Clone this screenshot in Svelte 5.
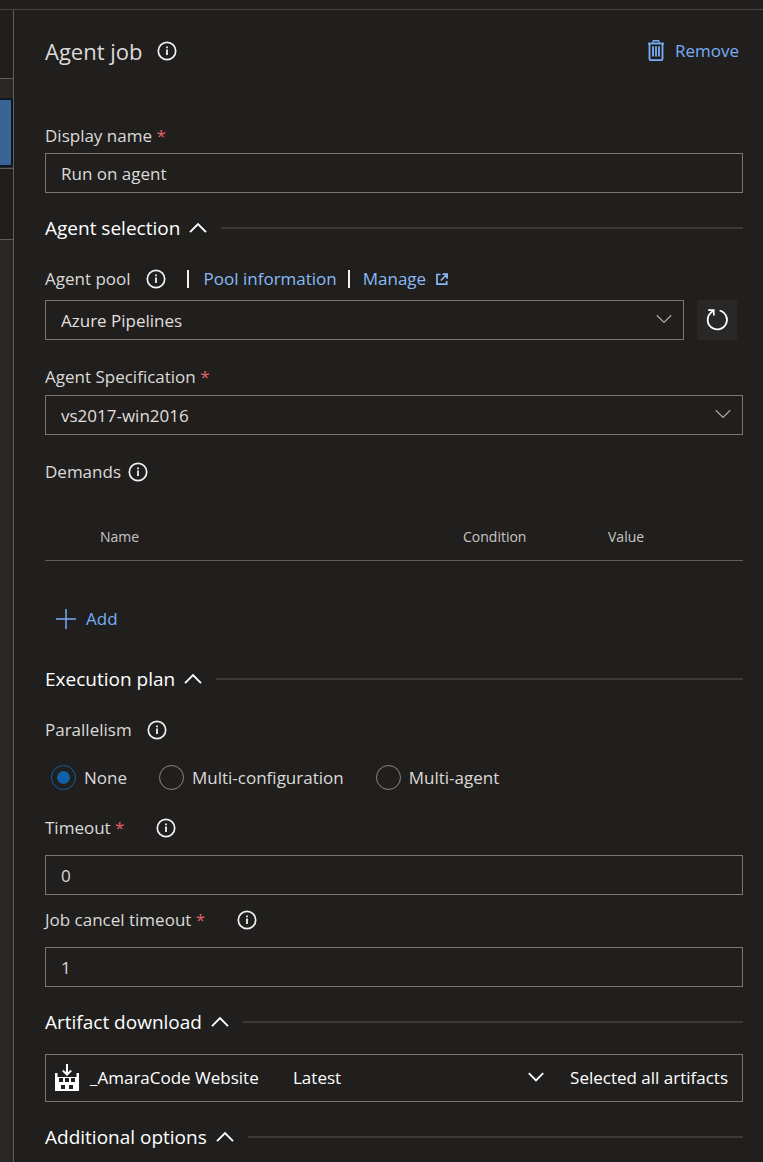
<script>
  let displayName = $state("Run on agent");
  let pool = $state("Azure Pipelines");
  let spec = $state("vs2017-win2016");
  let parallelism = $state("None");
  let timeout = $state("0");
  let cancelTimeout = $state("1");
  let version = $state("Latest");

  const modes = ["None", "Multi-configuration", "Multi-agent"];
  let open = $state({ agent: true, plan: true, artifacts: true, options: true });
</script>

{#snippet info(label)}
  <button class="info" type="button" aria-label="About {label}">
    <svg viewBox="0 0 20 20" width="20" height="20">
      <circle cx="10" cy="10" r="8.7" fill="none" stroke="currentColor" stroke-width="1.7" />
      <path d="M9.1 8.4h1.8v5.6H9.1zM9.1 5.6h1.8v1.7H9.1z" fill="currentColor" />
    </svg>
  </button>
{/snippet}

{#snippet chevron()}
  <svg class="chevron" viewBox="0 0 16 10" width="16" height="10">
    <path d="M.8 1.2 8 8.4l7.2-7.2" fill="none" stroke="currentColor" />
  </svg>
{/snippet}

{#snippet heading(key, text)}
  <div class="section">
    <h2>
      <button type="button" aria-expanded={open[key]} onclick={() => (open[key] = !open[key])}>
        {text}
        <svg class:closed={!open[key]} viewBox="0 0 18 12" width="18" height="12">
          <path d="M1 10.2 9 2.2l8 8" fill="none" stroke="currentColor" stroke-width="1.9" />
        </svg>
      </button>
    </h2>
    <span class="rule"></span>
  </div>
{/snippet}

<div class="page">
  <div class="topbar"></div>
  <div class="stages">
    <div class="stage first"></div>
    <div class="gap"><div class="selected"></div></div>
    <div class="stage second"></div>
  </div>

  <main>
    <header>
      <h1>Agent job</h1>
      {@render info("agent job")}
      <button class="command remove" type="button">
        <svg viewBox="0 0 18 22" width="18" height="22">
          <g fill="none" stroke="currentColor">
            <path d="M1 3.5h16" stroke-width="1.8" />
            <path d="M6 3.2V1.6q0-.8.8-.8h4.4q.8 0 .8.8v1.6" stroke-width="1.4" />
            <path d="M2.5 3.5V19q0 1.2 1.2 1.2h10.6q1.2 0 1.2-1.2V3.5" stroke-width="1.8" />
            <path d="M6 6.2v10.3M9 6.2v10.3M12 6.2v10.3" stroke-width="1.8" />
          </g>
        </svg>
        Remove
      </button>
    </header>

    <div class="label">
      <label for="display-name">Display name <span class="req">*</span></label>
    </div>
    <input class="box" id="display-name" type="text" bind:value={displayName} />

    {@render heading("agent", "Agent selection")}
    {#if open.agent}
      <div class="label pool">
        <label for="pool">Agent pool</label>
        {@render info("agent pool")}
        <span class="bar wide"></span>
        <a href="#pool-information">Pool information</a>
        <span class="bar"></span>
        <a class="manage" href="#manage">
          Manage
          <svg viewBox="0 0 12 12" width="12" height="12">
            <path d="M4.5 1.5H1v9.7h9.7V8M6.5 1.2h4.6v4.6M11 1.3 4.8 7.5" fill="none" stroke="currentColor" stroke-width="1.7" />
          </svg>
        </a>
      </div>
      <div class="pool-row">
        <div class="dropdown">
          <select class="box" id="pool" bind:value={pool}>
            <option>Azure Pipelines</option>
            <option>Default</option>
          </select>
          {@render chevron()}
        </div>
        <button class="refresh" type="button" aria-label="Refresh">
          <svg viewBox="0 0 24 24" width="24" height="24">
            <path d="M14.6 2.5A9.6 9.6 0 1 1 6 4.600L8.300 2.500" fill="none" stroke="currentColor" stroke-width="1.8" />
            <path d="M3.200 2.200h5.600v5.300" fill="none" stroke="currentColor" stroke-width="1.7" />
          </svg>
        </button>
      </div>

      <div class="label after-box">
        <label for="spec">Agent Specification <span class="req">*</span></label>
      </div>
      <div class="dropdown">
        <select class="box" id="spec" bind:value={spec}>
          <option>vs2017-win2016</option>
          <option>ubuntu-latest</option>
        </select>
        {@render chevron()}
      </div>

      <div class="label after-box near">
        <span>Demands</span>
        {@render info("demands")}
      </div>
      <table>
        <colgroup><col /><col class="condition" /><col class="value" /></colgroup>
        <thead>
          <tr><th scope="col">Name</th><th scope="col">Condition</th><th scope="col">Value</th></tr>
        </thead>
      </table>
      <button class="command add" type="button">
        <svg viewBox="0 0 22 22" width="22" height="22">
          <path d="M11 1v20M1 11h20" stroke="currentColor" stroke-width="1.5" />
        </svg>
        Add
      </button>
    {/if}

    {@render heading("plan", "Execution plan")}
    {#if open.plan}
      <div class="label plan">
        <span id="parallelism">Parallelism</span>
        {@render info("parallelism")}
      </div>
      <div class="radios" role="radiogroup" aria-labelledby="parallelism">
        {#each modes as mode}
          <label>
            <input type="radio" name="parallelism" value={mode} bind:group={parallelism} />
            {mode}
          </label>
        {/each}
      </div>

      <div class="label time first-time">
        <label for="timeout">Timeout <span class="req">*</span></label>
        {@render info("timeout")}
      </div>
      <input class="box" id="timeout" type="text" bind:value={timeout} />

      <div class="label time">
        <label for="cancel-timeout">Job cancel timeout <span class="req">*</span></label>
        {@render info("job cancel timeout")}
      </div>
      <input class="box" id="cancel-timeout" type="text" bind:value={cancelTimeout} />
    {/if}

    {@render heading("artifacts", "Artifact download")}
    {#if open.artifacts}
      <div class="artifact">
        <svg viewBox="0 0 24 28" width="24" height="28">
          <path fill="currentColor" fill-rule="evenodd" d="M0 9h2.500v4h19V9H24v18H0zM4 14v4h4v-4zM10 14v4h4v-4zM16 14v4h4v-4zM6 21v4h4v-4zM14 21v4h4v-4z" />
          <path d="M12 0v10M7.800 6.500l4.200 4.200 4.200-4.200" fill="none" stroke="currentColor" stroke-width="2" />
        </svg>
        <span class="source">_AmaraCode Website</span>
        <div class="dropdown">
          <select aria-label="Version" bind:value={version}>
            <option>Latest</option>
            <option>Specific version</option>
          </select>
          {@render chevron()}
        </div>
        <button type="button">Selected all artifacts</button>
      </div>
    {/if}

    {@render heading("options", "Additional options")}
  </main>
</div>

<style>
  :global(body) {
    background: #201f1e;
  }

  .page {
    display: grid;
    grid-template-columns: 13px 1fr;
    grid-template-rows: 10px 1fr;
    min-height: 100vh;
    color: #dcdad8;
    font-family: "Open Sans", "Noto Sans", sans-serif;
    font-size: 17px;
    line-height: 24px;
  }
  .topbar {
    grid-column: 1 / -1;
    border-bottom: 1px solid #484644;
  }

  button, input, select {
    margin: 0;
    padding: 0;
    border: 0;
    background: none;
    color: inherit;
    font: inherit;
  }
  button { cursor: pointer; }
  svg { display: block; flex: none; }

  /* edge of the stage list */
  .stages {
    background: #292827;
  }
  .stage {
    background: #201f1e;
    border-bottom: 1px solid #605e5c;
  }
  .first { height: 68px; }
  .gap {
    height: 89px;
    padding-top: 19px;
    box-sizing: border-box;
  }
  .selected {
    height: 65px;
    border: solid #0b1722;
    border-width: 2px 2px 2px 0;
    border-radius: 0 3px 3px 0;
    background: #3a6496;
  }
  .second {
    height: 70px;
    border-top: 1px solid #605e5c;
  }

  main {
    padding: 21px 20px 10px 31px;
    border-left: 1px solid #605e5c;
    min-width: 0;
  }

  header {
    display: flex;
    align-items: center;
    gap: 14px;
    height: 40px;
    margin-bottom: 53px;
  }
  h1 {
    margin: 0;
    font-size: 22px;
    font-weight: 400;
  }

  .info {
    color: #f3f2f1;
    flex: none;
  }

  .command {
    display: flex;
    align-items: center;
    color: #78adf5;
  }
  .remove {
    gap: 10px;
    margin-left: auto;
    margin-right: 4px;
  }
  .add {
    gap: 9px;
    height: 30px;
    margin: 43px 0 0 10px;
  }

  .label {
    display: flex;
    align-items: center;
    gap: 15px;
    height: 24px;
    margin-bottom: 5px;
  }
  .after-box {
    margin-top: 25px;
    margin-bottom: 6px;
  }
  .near { gap: 7px; }
  .req { color: #e4626c; }

  .box {
    display: block;
    box-sizing: border-box;
    width: 100%;
    height: 40px;
    padding: 1px 15px 0;
    border: 1px solid #797775;
    border-radius: 0;
  }
  select {
    appearance: none;
    width: 100%;
  }
  option { background: #201f1e; }

  .dropdown {
    position: relative;
    flex: 1;
    color: #e1dfdd;
  }
  .chevron {
    position: absolute;
    right: 12px;
    top: 50%;
    margin-top: -6px;
    color: #a6a4a2;
    stroke-width: 1.3;
    pointer-events: none;
  }

  .section {
    display: flex;
    align-items: center;
    gap: 14px;
    margin-top: 20px;
  }
  h2 {
    margin: 0;
    font-size: 19px;
    font-weight: 400;
    line-height: 30px;
    color: #fff;
  }
  h2 button {
    display: flex;
    align-items: center;
    gap: 9px;
  }
  .closed { transform: rotate(180deg); }
  .rule {
    flex: 1;
    height: 2px;
    background: #3b3a39;
  }

  .pool {
    margin: 24px 0 9px;
  }
  .bar {
    width: 2px;
    height: 18px;
    margin: 0 -4px;
    background: #f3f2f1;
  }
  .wide { margin: 0 0 0 6px; }
  a {
    color: #8ab9f5;
    text-decoration: none;
  }
  .manage {
    display: flex;
    align-items: center;
    gap: 10px;
    margin-left: 2px;
  }
  .pool-row {
    display: flex;
    gap: 13px;
    padding-right: 6px;
  }
  .refresh {
    display: grid;
    place-items: center;
    width: 40px;
    height: 40px;
    background: #292827;
    color: #fff;
  }

  table {
    width: 100%;
    margin-top: 29px;
    table-layout: fixed;
    border-collapse: collapse;
  }
  .condition { width: 145px; }
  .value { width: 135px; }
  th {
    height: 47px;
    padding: 0;
    border-bottom: 1px solid #605e5c;
    color: #c8c6c4;
    font-size: 14px;
    font-weight: 400;
    line-height: 20px;
    text-align: left;
  }
  th:first-child { padding-left: 55px; }

  .add + .section { margin-top: 30px; }
  .plan { margin: 24px 0 23px; }
  .radios {
    display: flex;
    gap: 32px;
    padding-left: 6px;
  }
  .radios label {
    display: flex;
    align-items: center;
    gap: 8px;
    height: 25px;
  }
  .radios input {
    appearance: none;
    display: grid;
    place-items: center;
    width: 25px;
    height: 25px;
    border: 1px solid #8a8886;
    border-radius: 50%;
  }
  .radios input:checked { border-color: #1160a3; }
  .radios input:checked::before {
    content: "";
    width: 13px;
    height: 13px;
    border-radius: 50%;
    background: #0f60a8;
  }

  .time {
    gap: 32px;
    margin: 13px 0 15px;
  }
  .first-time { margin-top: 26px; }

  .artifact {
    display: flex;
    align-items: center;
    box-sizing: border-box;
    height: 48px;
    margin-top: 17px;
    padding: 0 14px 0 9px;
    border: 1px solid #797775;
    color: #fff;
  }
  .source {
    width: 203px;
    margin-left: 11px;
  }
  .artifact .dropdown {
    margin-right: 14px;
    color: #fff;
  }
  .artifact .chevron {
    color: #fff;
    stroke-width: 1.8;
  }
</style>
